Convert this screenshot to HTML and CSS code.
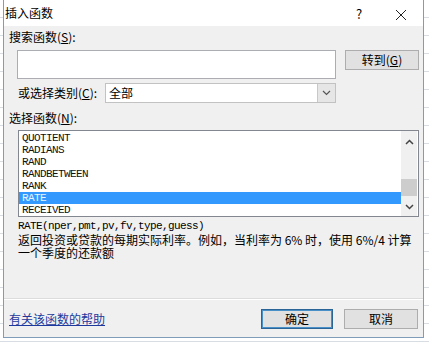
FILE: index.html
```html
<!DOCTYPE html>
<html lang="zh-CN">
<head>
    <meta charset="UTF-8">
    <meta name="viewport" content="width=device-width, initial-scale=1.0">
    <title>插入函数</title>
    <link rel="stylesheet" href="styles.css">
</head>
<body>
    <div class="dialog">
        <div class="titlebar">
            <span class="title">插入函数</span>
            <span class="help">?</span>
            <span class="close">
                <svg width="12" height="12" viewBox="0 0 12 12"><path d="M1 1L11 11M11 1L1 11" stroke="#222" stroke-width="1" fill="none"/></svg>
            </span>
        </div>
        <div class="content">
            <div class="label">搜索函数(<u>S</u>):</div>
            <div class="search-row">
                <div class="search-box"></div>
                <button class="btn">转到(<u>G</u>)</button>
            </div>
            <div class="category-row">
                <span class="cat-label">或选择类别(<u>C</u>):</span>
                <div class="select">
                    <span class="select-text">全部</span>
                    <span class="select-arrow">
                        <svg width="9" height="6" viewBox="0 0 9 6"><path d="M1 1L4.5 4.5L8 1" stroke="#555" stroke-width="1.2" fill="none"/></svg>
                    </span>
                </div>
            </div>
            <div class="label list-label">选择函数(<u>N</u>):</div>
            <div class="listbox">
                <ul class="items">
                    <li>QUOTIENT</li>
                    <li>RADIANS</li>
                    <li>RAND</li>
                    <li>RANDBETWEEN</li>
                    <li>RANK</li>
                    <li class="selected">RATE</li>
                    <li>RECEIVED</li>
                </ul>
                <div class="scrollbar">
                    <svg class="arrow" width="9" height="6" viewBox="0 0 9 6"><path d="M1 5L4.5 1.5L8 5" stroke="#444" stroke-width="1.5" fill="none"/></svg>
                    <div class="track"><div class="thumb"></div></div>
                    <svg class="arrow" width="9" height="6" viewBox="0 0 9 6"><path d="M1 1L4.5 4.5L8 1" stroke="#444" stroke-width="1.5" fill="none"/></svg>
                </div>
            </div>
            <div class="signature">RATE(nper,pmt,pv,fv,type,guess)</div>
            <div class="description">返回投资或贷款的每期实际利率。例如，当利率为 6% 时，使用 6%/4 计算<br>一个季度的还款额</div>
        </div>
        <div class="footer">
            <a class="help-link" href="#">有关该函数的帮助</a>
            <div class="buttons">
                <button class="btn default">确定</button>
                <button class="btn">取消</button>
            </div>
        </div>
    </div>
</body>
</html>
```

FILE: styles.css
```css
body {
    margin: 0;
    height: 343px;
    overflow: hidden;
    background-color: #fff;
    background-image: repeating-linear-gradient(to bottom, transparent 0, transparent 17px, #d8dde4 17px, #d8dde4 18px);
    font-family: "Noto Sans CJK SC", "Liberation Sans", sans-serif;
    font-size: 12px;
    color: #000;
}
.dialog {
    margin-left: 3px;
    width: 419px;
    height: 337px;
    border: 1px solid #7f9db9;
    border-top: none;
    background: #f0f0f0;
    display: flex;
    flex-direction: column;
}
.titlebar {
    height: 26px;
    background: #fff;
    display: flex;
    align-items: center;
    padding-left: 1px;
}
.title {
    flex: 1;
    line-height: 16px;
}
.help {
    width: 12px;
    text-align: center;
    font-size: 13px;
    margin-right: 30px;
}
.close {
    width: 12px;
    height: 12px;
    margin-right: 16px;
}
.content {
    padding: 3px 4px 0 5px;
    flex: 1;
    border-bottom: 1px solid #dcdcdc;
}
.label {
    line-height: 16px;
    height: 16px;
}
.list-label {
    margin-top: 7px;
}
u {
    text-decoration: underline;
    text-underline-offset: 1px;
}
.search-row {
    display: flex;
    align-items: flex-start;
    gap: 9px;
    margin-top: 5px;
    padding-left: 8px;
}
.search-box {
    width: 317px;
    height: 27px;
    border: 1px solid #abadb3;
    background: #fff;
}
.btn {
    width: 74px;
    height: 20px;
    padding: 0;
    border: 1px solid #adadad;
    background: #e1e1e1;
    font-family: "Noto Sans CJK SC", "Liberation Sans", sans-serif;
    font-size: 12px;
    line-height: 16px;
    color: #000;
}
.btn.default {
    width: 72px;
    border: 1px solid #2a6496;
    box-shadow: inset 0 0 0 1px #4a90c8;
}
.category-row {
    display: flex;
    align-items: center;
    margin-top: 4px;
    padding-left: 9px;
}
.cat-label {
    width: 87px;
    line-height: 16px;
}
.select {
    width: 229px;
    height: 18px;
    border: 1px solid #c2c2c2;
    background: #fff;
    display: flex;
    align-items: center;
}
.select-text {
    flex: 1;
    padding-left: 3px;
    line-height: 16px;
}
.select-arrow {
    width: 17px;
    height: 18px;
    background: #e6e6e6;
    border-left: 1px solid #c8c8c8;
    display: flex;
    align-items: center;
    justify-content: center;
}
.listbox {
    margin: 4px 0 0 9px;
    width: 399px;
    height: 85px;
    border: 1px solid #828790;
    background: #fff;
    display: flex;
}
.items {
    list-style: none;
    margin: 0;
    padding: 1px 0 0 0;
    flex: 1;
}
.items li {
    height: 12px;
    line-height: 12px;
    padding-left: 3px;
    font-family: "Liberation Mono", monospace;
    font-size: 11px;
    letter-spacing: -0.6px;
    color: #111;
}
.items li.selected {
    background: #3399ff;
    color: #e8f4ff;
}
.scrollbar {
    width: 16px;
    background: #f0f0f0;
    display: flex;
    flex-direction: column;
    align-items: center;
    padding: 8px 0 6px;
    box-sizing: border-box;
    margin-right: 1px;
}
.arrow {
    flex: none;
}
.track {
    flex: 1;
    width: 16px;
    display: flex;
    flex-direction: column;
    justify-content: flex-end;
    padding-bottom: 8px;
}
.thumb {
    height: 17px;
    background: #cdcdcd;
}
.signature {
    margin: 2px 0 0 9px;
    font-family: "Liberation Mono", monospace;
    font-size: 11px;
    letter-spacing: -0.6px;
    line-height: 14px;
}
.description {
    margin: 0 0 0 9px;
    line-height: 13px;
}
.footer {
    height: 37px;
    display: flex;
    align-items: center;
    justify-content: space-between;
    padding: 0 5px 0 5px;
    border-top: 1px solid #fff;
}
.help-link {
    color: #1c3a9e;
    text-decoration: underline;
    line-height: 16px;
}
.buttons {
    display: flex;
    gap: 11px;
}
```
